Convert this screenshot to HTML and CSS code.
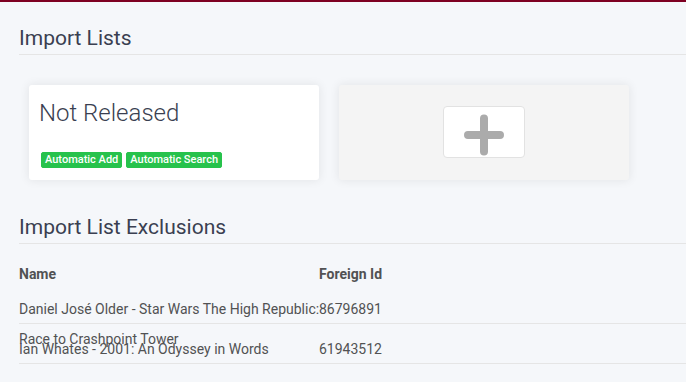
FILE: index.html
```html
<!DOCTYPE html>
<html>
<head>
<meta charset="utf-8">
<link rel="stylesheet" href="styles.css">
</head>
<body>
<div class="topbar"></div>
<main class="content">
  <section class="fieldset first">
    <div class="legend">Import Lists</div>
    <div class="lists">
      <div class="card import-list">
        <div class="list-name">Not Released</div>
        <div class="enabled">
          <span class="label">Automatic Add</span>
          <span class="label">Automatic Search</span>
        </div>
      </div>
      <div class="card add-list">
        <div class="add-center">
          <svg class="plus" viewBox="0 0 40 45" width="40" height="45">
            <path d="M20 6.5 V39.5 M4 23 H36" stroke="#ababab" stroke-width="8" stroke-linecap="round" fill="none"/>
          </svg>
        </div>
      </div>
    </div>
  </section>
  <section class="fieldset">
    <div class="legend">Import List Exclusions</div>
    <div class="ex-header">
      <div class="col-name">Name</div>
      <div class="col-id">Foreign Id</div>
    </div>
    <div class="ex-row">
      <div class="col-name"><div class="name-text">Daniel José Older - Star Wars The High Republic: Race to Crashpoint Tower</div></div>
      <div class="col-id">86796891</div>
    </div>
    <div class="ex-row">
      <div class="col-name"><div class="name-text">Ian Whates - 2001: An Odyssey in Words</div></div>
      <div class="col-id">61943512</div>
    </div>
  </section>
</main>
</body>
</html>
```
FILE: styles.css
```css
* { box-sizing: border-box; }
html, body {
  margin: 0;
  padding: 0;
  background: #f5f7fa;
  font-family: Roboto, "Noto Sans", sans-serif;
  font-size: 14px;
  line-height: 1.528571429;
  color: #515253;
  overflow: hidden;
}
.topbar {
  height: 2px;
  background: #7e0022;
}
.content {
  padding: 20px 0 0 19px;
}
.fieldset {
  margin-bottom: 20px;
}
.fieldset.first {
  margin-bottom: 21px;
}
.legend {
  margin-bottom: 20px;
  border-bottom: 1px solid #e5e5e5;
  color: #3a3f51;
  font-size: 21px;
  font-weight: 400;
}
.lists {
  display: flex;
  flex-wrap: wrap;
}
.card {
  margin: 10px;
  padding: 10px;
  width: 290px;
  height: 95px;
  border-radius: 3px;
  background: #fff;
  box-shadow: 0 0 10px 1px rgba(0, 0, 0, 0.07);
}
.list-name {
  font-size: 24px;
  font-weight: 300;
  color: #3a3f51;
  margin-bottom: 20px;
  white-space: nowrap;
}
.enabled {
  display: flex;
  flex-wrap: wrap;
}
.label {
  display: inline-block;
  margin: 0 2px;
  padding: 1px 3px 2px;
  border: 1px solid #27c24c;
  border-radius: 2px;
  background: #27c24c;
  color: #fff;
  font-size: 11px;
  font-weight: 500;
  line-height: 1;
  white-space: nowrap;
}
.add-list {
  background: #f4f4f4;
  display: flex;
  justify-content: center;
  align-items: flex-start;
  padding-top: 21px;
}
.add-center {
  padding: 5px 20px 0;
  border: 1px solid #e2e2e2;
  border-radius: 4px;
  background: #fff;
  line-height: 0;
}
.plus { display: block; width: 40px; height: 45px; }
.ex-header {
  display: flex;
  font-weight: bold;
  margin-top: 3px;
  margin-bottom: 8px;
}
.ex-row {
  display: flex;
  align-items: stretch;
  height: 30px;
  margin-bottom: 10px;
  border-bottom: 1px solid #e5e5e5;
  line-height: 30px;
}
.col-name { flex: 0 0 300px; min-width: 0; }
.name-text { margin-right: -8px; }
.col-id { flex: 0 0 400px; }
```
